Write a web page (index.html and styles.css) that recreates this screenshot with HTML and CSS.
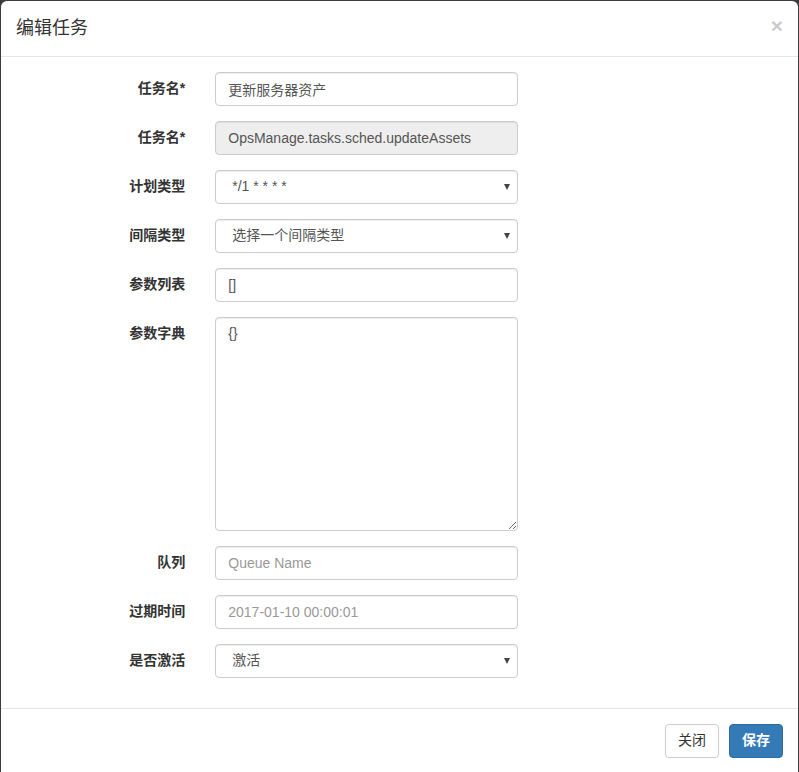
FILE: index.html
```html
<!DOCTYPE html>
<html lang="zh">
<head>
<meta charset="utf-8">
<title>编辑任务</title>
<link rel="stylesheet" href="styles.css">
</head>
<body>
<div class="modal">
  <div class="modal-header">
    <button class="close" type="button">&times;</button>
    <h4 class="modal-title">编辑任务</h4>
  </div>
  <div class="modal-body">
    <form class="form-horizontal">
      <div class="form-group">
        <label class="control-label">任务名*</label>
        <div class="control"><input class="form-control" type="text" value="更新服务器资产"></div>
      </div>
      <div class="form-group">
        <label class="control-label">任务名*</label>
        <div class="control"><input class="form-control" type="text" value="OpsManage.tasks.sched.updateAssets" disabled></div>
      </div>
      <div class="form-group">
        <label class="control-label">计划类型</label>
        <div class="control"><div class="select-wrap"><select class="form-control"><option>*/1 * * * *</option></select></div></div>
      </div>
      <div class="form-group">
        <label class="control-label">间隔类型</label>
        <div class="control"><div class="select-wrap"><select class="form-control"><option>选择一个间隔类型</option></select></div></div>
      </div>
      <div class="form-group">
        <label class="control-label">参数列表</label>
        <div class="control"><input class="form-control" type="text" value="[]"></div>
      </div>
      <div class="form-group">
        <label class="control-label">参数字典</label>
        <div class="control"><textarea class="form-control textarea">{}</textarea></div>
      </div>
      <div class="form-group">
        <label class="control-label">队列</label>
        <div class="control"><input class="form-control" type="text" placeholder="Queue Name"></div>
      </div>
      <div class="form-group">
        <label class="control-label">过期时间</label>
        <div class="control"><input class="form-control" type="text" placeholder="2017-01-10 00:00:01"></div>
      </div>
      <div class="form-group">
        <label class="control-label">是否激活</label>
        <div class="control"><div class="select-wrap"><select class="form-control"><option>激活</option></select></div></div>
      </div>
    </form>
  </div>
  <div class="modal-footer">
    <button class="btn btn-default" type="button">关闭</button>
    <button class="btn btn-primary" type="button">保存</button>
  </div>
</div>
</body>
</html>
```
FILE: styles.css
```css
html, body {
  margin: 0;
  padding: 0;
  height: 100%;
  overflow: hidden;
}
body {
  background: #3f3b3c;
  font-family: "Liberation Sans", Arial, "Noto Sans CJK SC", sans-serif;
  font-size: 14px;
  line-height: 1.42857;
  color: #333;
}
.modal {
  margin: 1px 1px 0 1px;
  background: #fff;
  border-radius: 6px 6px 0 0;
}
.modal-header {
  padding: 15px;
  border-bottom: 1px solid #e5e5e5;
}
.modal-title {
  margin: 0;
  height: 25px;
  font-size: 18px;
  font-weight: 400;
  line-height: 25px;
  color: #333;
}
.close {
  float: right;
  margin-top: -1px;
  padding: 0;
  border: 0;
  background: transparent;
  font-family: "Liberation Sans", Arial, sans-serif;
  font-size: 21px;
  font-weight: 700;
  line-height: 1;
  color: #000;
  opacity: 0.2;
  text-shadow: 0 1px 0 #fff;
  cursor: pointer;
}
.modal-body {
  padding: 15px 0;
}
.form-horizontal {
  margin: 0;
}
.form-group {
  display: grid;
  grid-template-columns: 25% 41.8%;
  margin-bottom: 15px;
}
.control-label {
  padding: 7px 15px 0;
  text-align: right;
  font-weight: 700;
  color: #333;
}
.control {
  padding: 0 15px;
}
.form-control {
  display: block;
  width: 100%;
  height: 34px;
  box-sizing: border-box;
  margin: 0;
  padding: 6px 12px;
  font-family: "Liberation Sans", Arial, "Noto Sans CJK SC", sans-serif;
  font-size: 14px;
  line-height: 1.42857;
  color: #555;
  background: #fff;
  border: 1px solid #ccc;
  border-radius: 4px;
  box-shadow: inset 0 1px 1px rgba(0, 0, 0, 0.075);
  outline: none;
}
.form-control::placeholder {
  color: #999;
  opacity: 1;
}
.form-control:disabled {
  background: #eee;
  opacity: 1;
  color: #555;
}
.textarea {
  height: 214px;
  resize: vertical;
}
.select-wrap {
  position: relative;
}
.select-wrap select {
  -webkit-appearance: none;
  appearance: none;
  padding-left: 16px;
  padding-right: 24px;
}
.select-wrap::after {
  content: "";
  position: absolute;
  right: 8px;
  top: 14px;
  width: 0;
  height: 0;
  border-left: 3.5px solid transparent;
  border-right: 3.5px solid transparent;
  border-top: 6px solid #444;
  pointer-events: none;
}
.modal-footer {
  display: flex;
  justify-content: flex-end;
  gap: 10px;
  padding: 15px;
  border-top: 1px solid #e5e5e5;
}
.btn {
  display: inline-block;
  height: 34px;
  box-sizing: border-box;
  padding: 6px 12px;
  font-family: "Liberation Sans", Arial, "Noto Sans CJK SC", sans-serif;
  font-size: 14px;
  line-height: 1.42857;
  border: 1px solid transparent;
  border-radius: 4px;
  cursor: pointer;
}
.btn-default {
  color: #333;
  background: #fff;
  border-color: #ccc;
}
.btn-primary {
  color: #fff;
  background: #337ab7;
  border-color: #2e6da4;
  font-weight: 700;
}
```
